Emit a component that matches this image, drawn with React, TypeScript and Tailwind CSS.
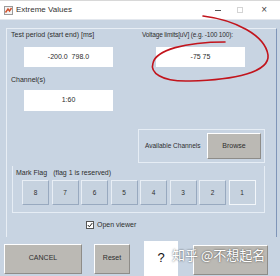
const font = { fontFamily: '"Liberation Sans", Arial, sans-serif' }

const flags = ['8', '7', '6', '5', '4', '3', '2', '1']

function Field({ value, w = 'w-[89px]', h = 'h-[20px]' }: { value: string; w?: string; h?: string }) {
  return (
    <div className={`${w} ${h} bg-white flex items-center justify-center text-[7px] text-[#2a2a2a] whitespace-pre`}>
      {value}
    </div>
  )
}

export default function App() {
  return (
    <div className="relative w-[280px] h-[276px] overflow-hidden bg-[#c8d4e2] flex flex-col text-[#2e2e2e]" style={font}>
      {/* title bar */}
      <div className="h-[20px] shrink-0 bg-white border-t border-[#d8d8d8] border-b border-b-[#e4e8ee] flex items-center">
        <svg width="9" height="9" viewBox="0 0 9 9" className="ml-[4px]">
          <rect x="0.5" y="0.5" width="8" height="8" fill="#f4f4f4" stroke="#9a9a9a" />
          <path d="M1.5 6.5 L4 3 L5.5 5 L7.5 2" stroke="#d0502a" strokeWidth="1.4" fill="none" />
        </svg>
        <span className="ml-[3px] text-[8px] text-[#333]">Extreme Values</span>
        <div className="ml-auto flex items-center text-[#444]">
          <span className="w-[6px] h-px bg-[#555] mr-[16px]" />
          <span className="w-[6px] h-[6px] border border-[#d4d4d4] mr-[18px]" />
          <span className="text-[10px] leading-none mr-[13px]">×</span>
        </div>
      </div>

      {/* main frame */}
      <div className="ml-[6px] mt-[8px] w-[271px] border-l border-t border-r border-[#e8eef5] border-r-[#7f95b8] pb-[6px]">
        <div className="flex">
          <div className="w-[133px]">
            <div className="pl-[4px] pt-[1px] text-[7px] leading-[9px]">Test period (start end) [ms]</div>
            <div className="mt-[8px] ml-[17px]">
              <Field value="-200.0  798.0" />
            </div>
          </div>
          <div className="flex-1">
            <div className="pl-[2px] pt-[1px] text-[6.5px] leading-[9px] tracking-[-0.15px]">Voltage limits[uV] (e.g. -100 100):</div>
            <div className="mt-[8px] ml-[16px]">
              <Field value="-75 75" />
            </div>
          </div>
        </div>

        <div className="pl-[4px] mt-[8px] text-[7px] leading-[9px]">Channel(s)</div>
        <div className="mt-[6px] ml-[17px]">
          <Field value="1:60" h="h-[21px]" />
        </div>

        {/* available channels */}
        <div className="mt-[18px] ml-[131px] w-[127px] h-[34px] border border-[#e6edf5] flex items-center">
          <span className="pl-[6px] text-[6.5px]">Available Channels</span>
          <div className="ml-auto mr-[3px] w-[54px] h-[26px] bg-[#bbb9b4] border-t border-l border-white border-r border-b border-r-[#8e8c88] border-b-[#8e8c88] flex items-center justify-center text-[7px]">
            Browse
          </div>
        </div>

        {/* mark flag */}
        <div className="mt-[3px] ml-[5px] w-[253px] border-l border-r border-b border-[#e6edf5] pb-[7px]">
          <div className="pl-[3px] pt-[2px] text-[7px] leading-[9px] flex">
            <span>Mark Flag</span>
            <span className="ml-[6px]">(flag 1 is reserved)</span>
          </div>
          <div className="mt-[3px] ml-[9px] flex gap-[2.5px]">
            {flags.map(f => (
              <div
                key={f}
                className={`w-[27px] h-[25px] flex items-center justify-center text-[6.5px] bg-[#c6d2df] border ${
                  f === '1' ? 'border-[#f2f6fa]' : 'border-t-[#e8eef5] border-l-[#e8eef5] border-r-[#98a9bf] border-b-[#98a9bf]'
                }`}
              >
                {f}
              </div>
            ))}
          </div>
        </div>

        <div className="mt-[7px] ml-[79px] flex items-center gap-[3px]">
          <div className="w-[8px] h-[8px] bg-white border border-[#555] flex items-center justify-center">
            <svg width="6" height="6" viewBox="0 0 6 6">
              <path d="M0.8 3 L2.4 4.8 L5.3 1" stroke="#222" strokeWidth="1" fill="none" />
            </svg>
          </div>
          <span className="text-[7px]">Open viewer</span>
        </div>
      </div>

      {/* bottom buttons */}
      <div className="mt-[6px] flex items-start">
        <div className="ml-[4px] mt-[1px] w-[78px] h-[30px] bg-[#bbb9b4] border-t border-l border-white border-r border-b border-r-[#8e8c88] border-b-[#8e8c88] flex items-center justify-center text-[7px]">
          CANCEL
        </div>
        <div className="ml-[12px] mt-[1px] w-[36px] h-[30px] bg-[#bbb9b4] border-t border-l border-white border-r border-b border-r-[#8e8c88] border-b-[#8e8c88] flex items-center justify-center text-[7px]">
          Reset
        </div>
        <div className="ml-[14px] -mt-[2px] w-[34px] h-[35px] bg-white flex items-center justify-center text-[13px] text-[#111]">
          ?
        </div>
        <div className="ml-[15px] mt-[2px] w-[75px] h-[30px] bg-[#bbb9b4] border-t border-l border-white border-r border-b border-r-[#8e8c88] border-b-[#8e8c88]" />
      </div>

      {/* red hand-drawn mark */}
      <svg className="absolute left-0 top-0 pointer-events-none" width="280" height="276" viewBox="0 0 280 276">
        <path
          d="M203 16 C235 20 265 35 268 55 C270 72 235 80 190 81 C160 82 150 72 153 63 C156 50 185 42 225 42"
          stroke="#c2141c"
          strokeWidth="1.6"
          fill="none"
          strokeLinecap="round"
        />
      </svg>

      {/* watermark */}
      <div
        className="absolute left-[172px] top-[248px] text-[13px] leading-none text-white whitespace-nowrap [text-shadow:0_0_2px_rgba(0,0,0,0.7)]"
        style={{ fontFamily: '"Noto Sans CJK SC", "Liberation Sans", sans-serif' }}
      >
        知乎 @不想起名
      </div>
    </div>
  )
}
